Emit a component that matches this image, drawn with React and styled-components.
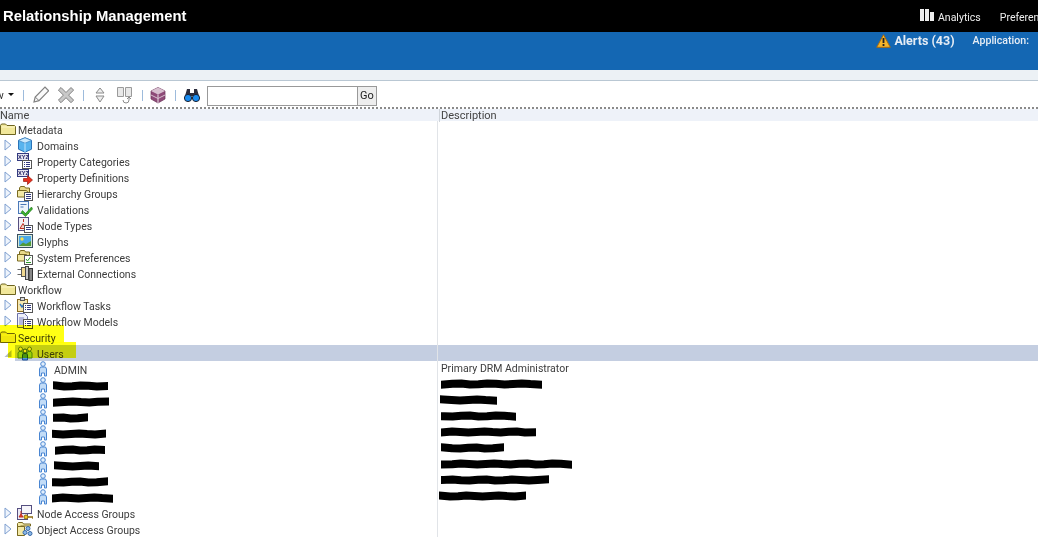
import styled, { createGlobalStyle } from "styled-components";

const GlobalStyle = createGlobalStyle`
  html, body { margin: 0; padding: 0; background: #fff; overflow: hidden; }
  body { font-family: Roboto, "Liberation Sans", Arial, sans-serif; font-size: 10.5px; color: #333; }
`;

const Page = styled.div`
  width: 1038px;
  height: 545px;
  overflow: hidden;
`;

const TopBar = styled.header`
  height: 32px;
  background: #000;
  color: #fff;
  display: flex;
  align-items: center;
  justify-content: space-between;
  padding-left: 3px;
  white-space: nowrap;
`;

const Title = styled.div`
  font-family: "Liberation Sans", Arial, sans-serif;
  font-size: 14.8px;
  font-weight: 700;
`;

const TopLinks = styled.nav`
  display: flex;
  align-items: center;
  width: 118px;
  overflow: hidden;
  flex: none;
`;

const BarsIcon = styled.svg`
  width: 14px;
  height: 16px;
  flex: none;
  margin-top: -6px;
`;

const TopLink = styled.span`
  font-size: 10.5px;
  color: #eee;
  padding-top: 2px;
  flex: none;
  margin-left: ${(p) => p.$gap || 0}px;
`;

const BlueBar = styled.div`
  height: 38px;
  background: #1467b3;
  color: #e6edf5;
  display: flex;
  justify-content: flex-end;
  align-items: flex-start;
  padding: 1px 9px 0 0;
  font-size: 10.6px;
  font-weight: 700;
  box-sizing: border-box;
`;

const AlertLink = styled.span`
  display: flex;
  align-items: center;
  gap: 3px;
  height: 15px;
  margin-right: 18px;
  font-size: 12.5px;
`;

const AppLabel = styled.span`
  height: 15px;
  line-height: 15px;
  font-weight: 500;
`;

const Band = styled.div`
  height: 10px;
  background: #ecf1f5;
  border-bottom: 1px solid #b9c7d3;
`;

const Toolbar = styled.div`
  height: 24px;
  padding-top: 2px;
  display: flex;
  align-items: center;
  background: #fff;
  white-space: nowrap;
  border-bottom: 2px dotted #8a8a8a;
`;

const ViewMenu = styled.span`
  margin-left: -20px;
  width: 23px;
  font-size: 11px;
  flex: none;
`;

const Caret = styled.span`
  width: 0;
  height: 0;
  border-left: 3px solid transparent;
  border-right: 3px solid transparent;
  border-top: 3px solid #111;
  margin: 0 9px 2px 5px;
  flex: none;
`;

const Sep = styled.span`
  width: 1px;
  height: 11px;
  background: #9dbbdc;
  flex: none;
`;

const ToolIcon = styled.svg`
  width: ${(p) => p.$w || 16}px;
  height: 18px;
  flex: none;
  margin: ${(p) => p.$margin || "0"};
`;

const SearchInput = styled.input`
  width: 150px;
  height: 20px;
  margin-top: 1px;
  box-sizing: border-box;
  border: 1px solid #999;
  border-right: 0;
  padding: 0 2px;
  background: #fff;
  flex: none;
`;

const GoButton = styled.button`
  width: 20px;
  height: 20px;
  margin-top: 1px;
  padding: 0;
  box-sizing: border-box;
  border: 1px solid #999;
  background: #eee;
  color: #222;
  font-family: inherit;
  font-size: 11px;
  flex: none;
`;

const HeaderRow = styled.div`
  height: 12px;
  display: grid;
  grid-template-columns: 440px 1fr;
  background: #eef2f9;
  line-height: 13px;
  font-size: 11px;
  color: #444;
`;

const HeaderCell = styled.div`
  padding-left: ${(p) => p.$pad || 0}px;
  ${(p) => p.$divider && "border-right: 1px solid #cfd4da;"}
`;

const Row = styled.div`
  position: relative;
  height: 16px;
  display: grid;
  grid-template-columns: 437px 1px 1fr;
  color: #3c3c3c;
`;

const NameCell = styled.div`
  display: flex;
  align-items: center;
  height: 16px;
  padding-left: ${(p) => [0, 4, 35][p.$level]}px;
  background: ${(p) => (p.$selected ? "linear-gradient(90deg, #fff 15px, #c4cee1 15px)" : "transparent")};
  white-space: nowrap;
`;

const Divider = styled.div`
  background: #e1e4e8;
`;

const DescCell = styled.div`
  display: flex;
  align-items: center;
  height: 16px;
  padding-left: 3px;
  background: ${(p) => (p.$selected ? "#c4cee1" : "transparent")};
`;

const Toggle = styled.svg`
  width: 8px;
  height: 12px;
  flex: none;
  margin-right: 5px;
  margin-top: -1px;
`;

const TreeIcon = styled.svg`
  width: 16px;
  height: 16px;
  flex: none;
  margin-right: ${(p) => p.$gap}px;
`;

const Label = styled.span`
  line-height: 15px;
  margin-top: ${(p) => (p.$desc ? -1 : 2)}px;
`;

const Highlight = styled.span`
  position: absolute;
  left: ${(p) => p.$left}px;
  top: ${(p) => p.$top}px;
  width: ${(p) => p.$width}px;
  height: ${(p) => p.$height}px;
  background: #ffff14;
  mix-blend-mode: multiply;
  pointer-events: none;
`;

const ScribbleSvg = styled.svg`
  display: block;
  flex: none;
  height: 12px;
  margin-left: ${(p) => p.$offset || 0}px;
  margin-top: ${(p) => p.$shift}px;
`;

// marker strokes used to black out names
function Scribble({ width, offset, seed, shift }) {
  const pts = [];
  const steps = Math.round(width / 9);
  for (let i = 0; i <= steps; i++) {
    const x = 3 + (i * (width - 6)) / steps;
    const wob = Math.sin(i * 1.7 + seed * 2.3) * 0.5;
    pts.push(`${x.toFixed(1)} ${(6 + wob).toFixed(1)}`);
  }
  return (
    <ScribbleSvg $offset={offset} $shift={shift} width={width} viewBox={`0 0 ${width} 12`}>
      <path d={`M${pts.join("L")}`} fill="none" stroke="#000" strokeWidth="8" strokeLinecap="square" strokeLinejoin="round" />
    </ScribbleSvg>
  );
}

const icons = {
  folder: (
    <>
      <path d="M.5 13.5V4.5l1-1.5h4l1.5 1.5h7.5l1 1v8z" fill="#f1e79a" stroke="#6d6420" />
      <path d="M1.5 6h13.5" stroke="#fff8c8" />
    </>
  ),
  cube: (
    <>
      <path d="M8 .8l6.5 2.6v8.8L8 15.2l-6.5-3V3.4z" fill="#58b4ee" stroke="#2a73b8" />
      <path d="M1.5 3.4L8 6.2l6.5-2.8L8 .8z" fill="#cbeafd" stroke="#2a73b8" strokeWidth=".6" />
      <path d="M8 6.2v9" stroke="#bfe3fb" />
    </>
  ),
  xyz: (
    <>
      <rect x=".5" y=".5" width="11" height="7" fill="#e6e6f0" stroke="#333a80" />
      <text x="1" y="6.4" fontSize="5.6" fontWeight="700" fontFamily="Liberation Sans" fill="#1b1b60">XYZ</text>
      <rect x="5.5" y="7.5" width="9" height="8" fill="#fff" stroke="#555" />
      <path d="M7 9.5h1M7 11.5h1M7 13.5h1M9 9.5h4M9 11.5h4M9 13.5h4" stroke="#333a80" />
    </>
  ),
  xyzRed: (
    <>
      <rect x=".5" y=".5" width="11" height="7" fill="#e6e6f0" stroke="#333a80" />
      <text x="1" y="6.4" fontSize="5.6" fontWeight="700" fontFamily="Liberation Sans" fill="#1b1b60">XYZ</text>
      <path d="M6.5 9.5h4v-3l5 4.5-5 4.5v-3h-4z" fill="#e8301c" stroke="#9a1a10" strokeWidth=".7" />
    </>
  ),
  hierarchy: (
    <>
      <path d="M2.5 11V3l1-1.5h4l1 1.5h4v8z" fill="#e8d98a" stroke="#7a6a20" />
      <path d="M.5 12V5.5h9l1.5 2v4.5z" fill="#f3e9a6" stroke="#7a6a20" />
      <rect x="7.5" y="7.5" width="8" height="8" fill="#fff" stroke="#555" />
      <path d="M9 9.5h5M9 11.5h5M9 13.5h5" stroke="#333a80" />
    </>
  ),
  validation: (
    <>
      <rect x="1.5" y=".5" width="10" height="12" fill="#eef5fc" stroke="#4a78b8" />
      <path d="M3.5 3.5h6M3.5 6h3" stroke="#4a78b8" />
      <path d="M5.5 9.5l3 3 6-6.5 1 2-7 7.5-4.5-4z" fill="#3cb02c" stroke="#1d701a" strokeWidth=".6" />
    </>
  ),
  node: (
    <>
      <rect x="1.5" y=".5" width="10" height="13" fill="#f2f0f6" stroke="#554f80" />
      <path d="M6.5 2v3M3 11.5l3-5 3 5z" fill="#f4d0c8" stroke="#c02c20" />
      <rect x="7.5" y="8.5" width="8" height="7" fill="#fff" stroke="#555" />
      <path d="M9 10.5h5M9 12.5h5" stroke="#333a80" />
    </>
  ),
  glyph: (
    <>
      <rect x=".5" y="1.5" width="15" height="13" fill="#d8e8d8" stroke="#3a5060" />
      <rect x="2" y="3" width="12" height="10" fill="#4aa8e8" />
      <circle cx="5" cy="6" r="1.7" fill="#f8e050" />
      <path d="M2 13l4-3.5 3 1.5 5-3v5z" fill="#4f9a38" />
    </>
  ),
  prefs: (
    <>
      <path d="M2.5 11V3l1-1.5h4l1 1.5h4v8z" fill="#e8d98a" stroke="#7a6a20" />
      <path d="M.5 12V5.5h9l1.5 2v4.5z" fill="#f3e9a6" stroke="#7a6a20" />
      <rect x="7.5" y="6.5" width="8" height="9" fill="#fff" stroke="#555" />
      <path d="M9 10l1.5 2 3-4M9 13.5h5" fill="none" stroke="#2c9a2c" />
    </>
  ),
  external: (
    <>
      <path d="M.5 4.5h5M.5 9.5h5" stroke="#6a6a6a" strokeWidth="1.2" />
      <rect x="4.5" y="2.5" width="4" height="9" fill="#f0d890" stroke="#555" />
      <rect x="8.5" y="1.5" width="3" height="13" fill="#c8c8c8" stroke="#444" />
      <rect x="12" y="3.5" width="3.5" height="12" fill="#888" stroke="#333" />
    </>
  ),
  tasks: (
    <>
      <rect x=".5" y="2.5" width="10" height="12" fill="#f6e8b0" stroke="#8a6a20" />
      <rect x="3.5" y=".5" width="4" height="3" fill="#ddd" stroke="#555" />
      <path d="M3 7l2 3 3-4" fill="none" stroke="#2a72c0" strokeWidth="1.4" />
      <rect x="6.5" y="6.5" width="9" height="9" fill="#fff" stroke="#555" />
      <path d="M8 8.5h1M8 10.5h1M8 12.5h1M10 8.5h4M10 10.5h4M10 12.5h4" stroke="#333a80" />
    </>
  ),
  models: (
    <>
      <path d="M.5.5h7l3 3v11h-10z" fill="#eef0fa" stroke="#6a70a8" />
      <path d="M2 5h5M2 7h5M2 9h4M2 11h4" stroke="#7a80c0" />
      <rect x="6.5" y="6.5" width="9" height="9" fill="#fff" stroke="#555" />
      <path d="M8 8.5h1M8 10.5h1M8 12.5h1M10 8.5h4M10 10.5h4M10 12.5h4" stroke="#333a80" />
    </>
  ),
  users: (
    <>
      <circle cx="3.5" cy="4" r="2" fill="#f6e6b8" stroke="#5a7a20" />
      <circle cx="12.5" cy="4" r="2" fill="#f6e6b8" stroke="#5a7a20" />
      <path d="M1 13V8l1-1.5h3L6 8v5zM10 13V8l1-1.5h3L15 8v5z" fill="#9ad04a" stroke="#4f8420" />
      <circle cx="8" cy="6" r="2" fill="#f6e6b8" stroke="#1f4f90" />
      <path d="M5.5 15v-5l1-1.5h3l1 1.5v5z" fill="#4a94e4" stroke="#1f4f90" />
    </>
  ),
  user: (
    <>
      <circle cx="8" cy="3" r="2.3" fill="#e2effc" stroke="#4a86d2" />
      <path d="M4.5 15V8l1-2h5l1 2v7H9.5v-3h-3v3z" fill="#c2dcf7" stroke="#4a86d2" />
    </>
  ),
  nodeKey: (
    <>
      <rect x=".5" y="3.5" width="10" height="11" fill="#eceaf4" stroke="#554f80" />
      <rect x="4.5" y=".5" width="10" height="8" fill="#f6f5fa" stroke="#554f80" />
      <path d="M4 6v3M2 12l2-3 2 3z" fill="#e8402c" stroke="#c02c20" />
      <circle cx="9" cy="12" r="2" fill="#f2c820" stroke="#8a6a10" />
      <path d="M11 12h5v2" fill="none" stroke="#8a6a10" strokeWidth="1.3" />
    </>
  ),
  objectKey: (
    <>
      <path d="M.5 14.5V2.5l1-1h4l1 1.5h7v2h-10" fill="#f3e9a6" stroke="#7a6a20" />
      <path d="M.5 14.5h7V5.5h-7z" fill="#f3e9a6" stroke="#7a6a20" />
      <circle cx="11" cy="7.5" r="2" fill="#8ab8e8" stroke="#3a6aa8" />
      <circle cx="8" cy="11.5" r="2" fill="#8ab8e8" stroke="#3a6aa8" />
      <circle cx="13" cy="12.5" r="2" fill="#8ab8e8" stroke="#3a6aa8" />
    </>
  ),
};

const rows = [
  { level: 0, icon: "folder", name: "Metadata" },
  { level: 1, icon: "cube", name: "Domains" },
  { level: 1, icon: "xyz", name: "Property Categories" },
  { level: 1, icon: "xyzRed", name: "Property Definitions" },
  { level: 1, icon: "hierarchy", name: "Hierarchy Groups" },
  { level: 1, icon: "validation", name: "Validations" },
  { level: 1, icon: "node", name: "Node Types" },
  { level: 1, icon: "glyph", name: "Glyphs" },
  { level: 1, icon: "prefs", name: "System Preferences" },
  { level: 1, icon: "external", name: "External Connections" },
  { level: 0, icon: "folder", name: "Workflow" },
  { level: 1, icon: "tasks", name: "Workflow Tasks" },
  { level: 1, icon: "models", name: "Workflow Models" },
  { level: 0, icon: "folder", name: "Security", mark: { left: 0, top: -4, width: 64, height: 18 } },
  { level: 1, icon: "users", name: "Users", open: true, selected: true, mark: { left: 8, top: -3, width: 68, height: 16 } },
  { level: 2, icon: "user", name: "ADMIN", desc: "Primary DRM Administrator" },
  { level: 2, icon: "user", hidden: [55, 0], hiddenDesc: [101, 0] },
  { level: 2, icon: "user", hidden: [56, 0], hiddenDesc: [57, -1] },
  { level: 2, icon: "user", hidden: [35, 0], hiddenDesc: [75, 0] },
  { level: 2, icon: "user", hidden: [54, -1], hiddenDesc: [95, 0] },
  { level: 2, icon: "user", hidden: [50, 2], hiddenDesc: [63, 0] },
  { level: 2, icon: "user", hidden: [45, 1], hiddenDesc: [131, 0] },
  { level: 2, icon: "user", hidden: [56, -1], hiddenDesc: [108, 0] },
  { level: 2, icon: "user", hidden: [61, -1], hiddenDesc: [87, -2] },
  { level: 1, icon: "nodeKey", name: "Node Access Groups" },
  { level: 1, icon: "objectKey", name: "Object Access Groups" },
];

function TreeRow({ row, index }) {
  return (
    <Row>
      <NameCell $level={row.level} $selected={row.selected}>
        {row.level === 1 && (
          <Toggle viewBox="0 0 8 12">
            {row.open ? (
              <path d="M7.5 3v7H.5z" fill="#b4bcc4" />
            ) : (
              <path d="M1 1l6 5-6 5z" fill="#eef4fc" stroke="#7f9fd0" />
            )}
          </Toggle>
        )}
        <TreeIcon viewBox="0 0 16 16" $gap={row.level === 1 ? 4 : row.level === 2 ? 3 : 2}>
          {icons[row.icon]}
        </TreeIcon>
        {row.name && <Label>{row.name}</Label>}
        {row.hidden && <Scribble width={row.hidden[0]} offset={-1 + row.hidden[1]} seed={index} shift={2} />}
      </NameCell>
      <Divider />
      <DescCell $selected={row.selected}>
        {row.desc && <Label $desc>{row.desc}</Label>}
        {row.hiddenDesc && <Scribble width={row.hiddenDesc[0]} offset={row.hiddenDesc[1]} seed={index + 4} shift={-2} />}
      </DescCell>
      {row.mark && <Highlight $left={row.mark.left} $top={row.mark.top} $width={row.mark.width} $height={row.mark.height} />}
    </Row>
  );
}

export default function App() {
  return (
    <Page>
      <GlobalStyle />
      <TopBar>
        <Title>Relationship Management</Title>
        <TopLinks>
          <BarsIcon viewBox="0 0 14 16">
            <path d="M0 4h4v12H0zM5 0h4v16H5zM10 7h4v9h-4z" fill="#eee" />
          </BarsIcon>
          <TopLink $gap={4}>Analytics</TopLink>
          <TopLink $gap={19}>Preferences</TopLink>
        </TopLinks>
      </TopBar>
      <BlueBar>
        <AlertLink>
          <svg width="15" height="14" viewBox="0 0 15 14">
            <path d="M7.5.7l6.8 12.6H.7z" fill="#f6b52a" stroke="#a86a10" />
            <path d="M6.6 4h1.8v5H6.6zM6.6 10h1.8v2H6.6z" fill="#222" />
          </svg>
          Alerts (43)
        </AlertLink>
        <AppLabel>Application:</AppLabel>
      </BlueBar>
      <Band />
      <Toolbar>
        <ViewMenu>View</ViewMenu>
        <Caret />
        <Sep />
        <ToolIcon viewBox="0 0 16 18" $margin="0 0 0 9px">
          <path d="M1 16l1.2-5L12 1.2l3.6 3.6L6 14.6z" fill="#fafafa" stroke="#808080" strokeWidth="1.2" />
          <path d="M2.2 11L6 14.6" stroke="#808080" />
        </ToolIcon>
        <ToolIcon viewBox="0 0 16 18" $margin="0 9px 0 9px">
          <path d="M3 1.5l5 5 5-5 2.6 2.6-5 5 5 5-2.6 2.6-5-5-5 5L.4 14.1l5-5-5-5z" fill="#c8c8c8" stroke="#808080" />
        </ToolIcon>
        <Sep />
        <ToolIcon viewBox="0 0 10 18" $w={10} $margin="0 0 0 11px">
          <path d="M5 2l4 5H1zM1 10h8l-4 6z" fill="#eee" stroke="#8a8a8a" />
        </ToolIcon>
        <ToolIcon viewBox="0 0 16 18" $margin="0 9px 0 12px">
          <path d="M.5 1.5h6v9h-6zM8.5 1.5h6v9h-6z" fill="#e8e8e8" stroke="#9a9a9a" />
          <path d="M6 14a3 3 0 0 0 6 0v-2M10 13l2-2 2 2" fill="none" stroke="#8a8a8a" />
        </ToolIcon>
        <Sep />
        <ToolIcon viewBox="0 0 16 18" $margin="0 9px 0 7px">
          <path d="M8 1.5l7 3.5v8l-7 4-7-4V5z" fill="#8e4a78" stroke="#6a3058" strokeWidth=".7" />
          <path d="M1 5l7 3.5L15 5 8 1.5z" fill="#d8c0d0" />
          <path d="M8 8.5V17" stroke="#e8dce4" />
          <path d="M1 9l7 3.5L15 9" fill="none" stroke="#d8c0d0" />
        </ToolIcon>
        <Sep />
        <ToolIcon viewBox="0 0 16 18" $margin="0 7px 0 8px">
          <path d="M3 3h3v4h4V3h3l2 7H1z" fill="#2c2c3c" />
          <circle cx="4" cy="12" r="3.6" fill="#1a8cf0" stroke="#1a2030" />
          <circle cx="12" cy="12" r="3.6" fill="#1a8cf0" stroke="#1a2030" />
        </ToolIcon>
        <SearchInput />
        <GoButton>Go</GoButton>
      </Toolbar>
      <HeaderRow>
        <HeaderCell $divider>Name</HeaderCell>
        <HeaderCell $pad={1}>Description</HeaderCell>
      </HeaderRow>
      {rows.map((row, i) => (
        <TreeRow key={i} row={row} index={i} />
      ))}
    </Page>
  );
}
